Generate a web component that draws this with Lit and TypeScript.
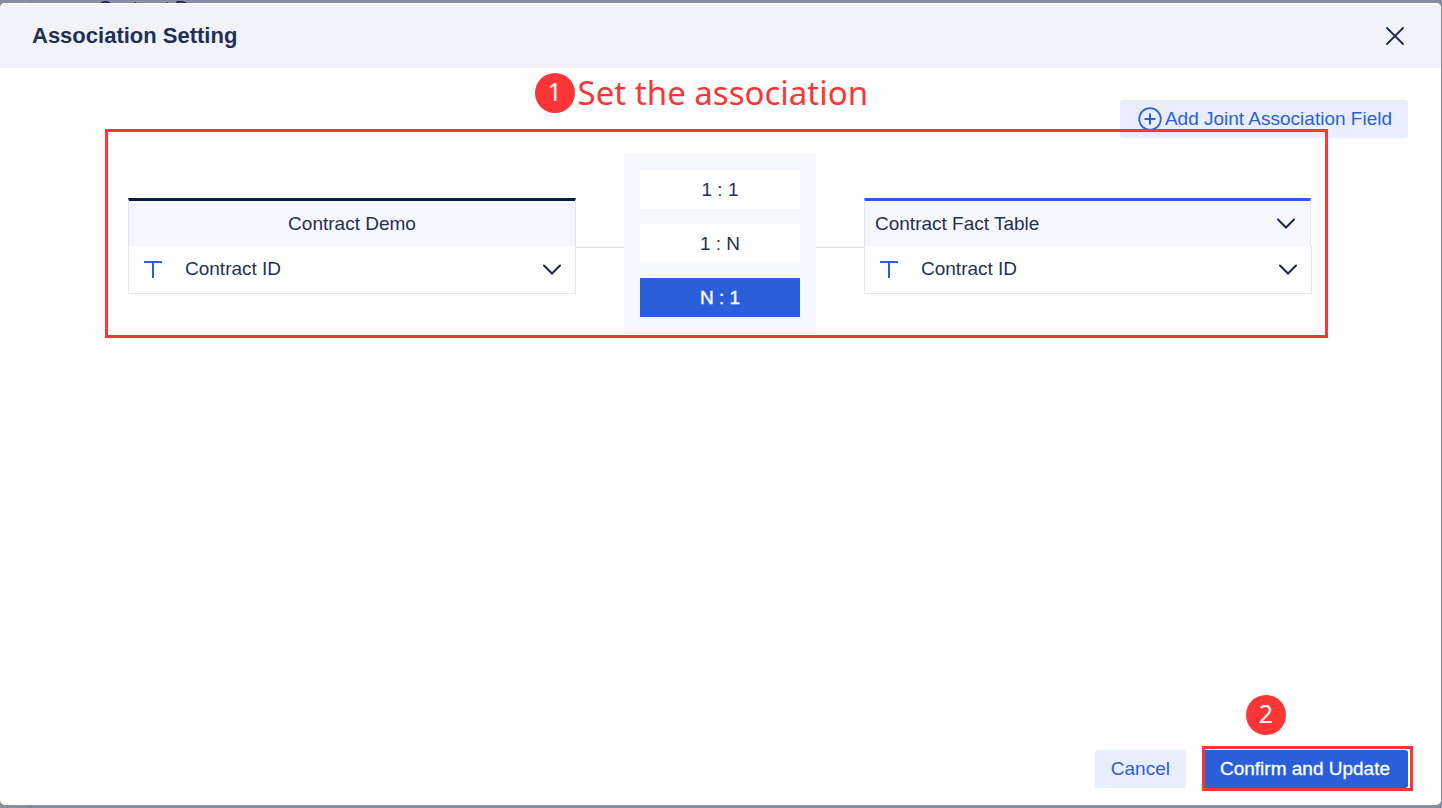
import { LitElement, html, css } from "lit";
import { customElement, property, state } from "lit/decorators.js";

const chevron = html`<svg class="chevron" width="20" height="12" viewBox="0 0 20 12" aria-hidden="true">
  <path d="M2 1.5 L10 9.5 L18 1.5" fill="none" stroke="#14264b" stroke-width="2" stroke-linecap="round" />
</svg>`;

const textType = html`<svg class="type" width="18" height="17" viewBox="0 0 18 17" aria-hidden="true">
  <path d="M0 1 H18 M9 1 V17" fill="none" stroke="#2b5fda" stroke-width="2" />
</svg>`;

@customElement("table-card")
export class TableCard extends LitElement {
  @property() name = "";
  @property() field = "";
  @property({ type: Boolean, reflect: true }) selectable = false;

  static styles = css`
    :host {
      display: block;
      --accent: #081d45;
    }
    :host([selectable]) {
      --accent: #2b5fda;
    }
    * {
      box-sizing: border-box;
    }
    .head,
    .row {
      display: grid;
      align-items: center;
      border: 1px solid #e4e5ee;
      border-width: 0 1px;
    }
    .head {
      height: 48px;
      border-top: 3px solid var(--accent);
      background: #f7f8fd;
      grid-template-columns: 1fr 34px;
    }
    :host([selectable]) .head {
      margin-right: 1px;
    }
    .title {
      grid-area: 1 / 1 / 2 / 3;
      margin: 0;
      font: inherit;
      text-align: center;
    }
    .row {
      height: 48px;
      border-bottom-width: 1px;
      background: #fff;
      grid-template-columns: 56px 1fr 33px;
    }
    select {
      appearance: none;
      border: 0;
      margin: 0;
      width: 100%;
      height: 100%;
      background: transparent;
      color: inherit;
      font: inherit;
      border-radius: 0;
      padding: 0 34px 0 10px;
      grid-area: 1 / 1 / 2 / 3;
    }
    .row select {
      grid-area: 1 / 1 / 2 / 4;
      padding-left: 56px;
      padding-bottom: 2px;
    }
    svg {
      pointer-events: none;
      display: block;
    }
    .type {
      grid-area: 1 / 1;
      margin-left: 15px;
    }
    .chevron {
      grid-area: 1 / 2;
    }
    .row .chevron {
      grid-area: 1 / 3;
    }
  `;

  render() {
    return html`
      <div class="head">
        ${this.selectable
          ? html`<select aria-label="Table"><option>${this.name}</option></select>${chevron}`
          : html`<h2 class="title">${this.name}</h2>`}
      </div>
      <div class="row">
        <select aria-label="Field of ${this.name}"><option>${this.field}</option></select>
        ${textType}${chevron}
      </div>
    `;
  }
}

@customElement("app-root")
export class AppRoot extends LitElement {
  @state() private relation = "N : 1";

  static styles = css`
    :host {
      display: block;
      font: 19px/24px "Liberation Sans", Arial, sans-serif;
      color: #1f3153;
    }
    * {
      box-sizing: border-box;
    }
    .page {
      position: relative;
      min-height: 100vh;
      padding: 3px 1px 3px 0;
      display: flex;
      background: #868d9e;
    }
    .behind {
      position: absolute;
      inset: 0 0 0 30px;
      border-left: 1px solid #777f92;
      padding-left: 67px;
      overflow: hidden;
      line-height: 16px;
      color: #10224c;
    }
    .dialog {
      position: relative;
      flex: 1;
      display: flex;
      flex-direction: column;
      background: #fff;
      border-radius: 5px;
      overflow: hidden;
    }
    .top {
      display: flex;
      align-items: center;
      justify-content: space-between;
      height: 65px;
      padding: 0 37px 0 32px;
      background: #f2f3f8;
      border-top: 1px solid #fff;
    }
    .top h1 {
      margin: 0;
      font-size: 22px;
      line-height: 28px;
    }
    button {
      font: inherit;
      border: 0;
      margin: 0;
      padding: 0 16px;
      height: 38px;
      border-radius: 3px;
      background: #e8eefb;
      color: #2b5fda;
      display: flex;
      align-items: center;
      white-space: nowrap;
    }
    .close {
      padding: 0;
      height: 20px;
      background: none;
    }
    .body {
      position: relative;
      flex: 1;
      padding: 32px 33px 0;
      display: flex;
      flex-direction: column;
    }
    .add {
      align-self: flex-end;
      gap: 3px;
      padding-left: 18px;
    }
    .assoc {
      position: relative;
      display: flex;
      align-items: flex-start;
      margin: 16px 96px 0 95px;
    }
    table-card {
      flex: 1;
      margin-top: 44px;
    }
    .line {
      width: 48px;
      height: 1px;
      margin-top: 93px;
      background: #dcdee6;
    }
    .kinds {
      border: 0;
      margin: 0;
      min-width: 0;
      width: 192px;
      padding: 16px 16px 18px;
      display: grid;
      gap: 15px;
      background: #f7f8fd;
    }
    .kind {
      position: relative;
      height: 39px;
      display: grid;
      place-items: center;
      background: #fff;
    }
    .kind input {
      appearance: none;
      position: absolute;
      inset: 0;
      margin: 0;
    }
    .kind.on {
      background: #2b5fda;
      color: #fff;
      -webkit-text-stroke: 0.4px #fff;
    }
    .mark {
      position: absolute;
      border: 3px solid #fc3636;
      pointer-events: none;
    }
    .assoc .mark {
      inset: -25px -16px -3px -23px;
    }
    .confirm .mark {
      inset: -4px -5px -3px 0;
    }
    .badge {
      width: 40px;
      height: 40px;
      border-radius: 50%;
      background: #fc3636;
      color: #fff;
      text-align: center;
      font: 25px/36px "Noto Sans", "Open Sans", sans-serif;
    }
    .note {
      position: absolute;
      top: 5px;
      left: 37.1%;
      display: flex;
      gap: 3px;
      color: #fc3636;
      font: 33px/40px "Noto Sans", "Open Sans", sans-serif;
      white-space: nowrap;
    }
    .foot {
      display: flex;
      justify-content: flex-end;
      gap: 16px;
      padding: 0 33px 17px;
    }
    .confirm {
      position: relative;
    }
    .confirm button {
      background: #2b5fda;
      color: #fff;
      padding: 0 18px;
      -webkit-text-stroke: 0.3px #fff;
    }
    .confirm .badge {
      position: absolute;
      left: 44px;
      top: -55px;
    }
  `;

  render() {
    return html`
      <div class="page">
        <div class="behind" aria-hidden="true">Contract D</div>
        <section class="dialog" role="dialog" aria-labelledby="title">
          <header class="top">
            <h1 id="title">Association Setting</h1>
            <button class="close" aria-label="Close">
              <svg width="18" height="18" viewBox="0 0 18 18" aria-hidden="true">
                <path d="M1 1 L17 17 M17 1 L1 17" stroke="#1b2d50" stroke-width="1.8" stroke-linecap="round" />
              </svg>
            </button>
          </header>
          <main class="body">
            <button class="add">
              <svg width="24" height="24" viewBox="0 0 24 24" fill="none" stroke="#2b5fda" aria-hidden="true">
                <circle cx="12" cy="12" r="10.8" stroke-width="1.7" />
                <path d="M12 6.5 V17.5 M6.5 12 H17.5" stroke-width="2" />
              </svg>
              <span>Add Joint Association Field</span>
            </button>
            <div class="assoc">
              <table-card name="Contract Demo" field="Contract ID"></table-card>
              <div class="line"></div>
              <fieldset class="kinds" aria-label="Relation">
                ${["1 : 1", "1 : N", "N : 1"].map(
                  (k) => html`<label class="kind ${k === this.relation ? "on" : ""}">
                    <input
                      type="radio"
                      name="relation"
                      .checked=${k === this.relation}
                      @change=${() => (this.relation = k)}
                    />
                    <span>${k}</span>
                  </label>`
                )}
              </fieldset>
              <div class="line"></div>
              <table-card selectable name="Contract Fact Table" field="Contract ID"></table-card>
              <div class="mark"></div>
            </div>
            <div class="note"><span class="badge">1</span><span>Set the association</span></div>
          </main>
          <footer class="foot">
            <button>Cancel</button>
            <div class="confirm">
              <button>Confirm and Update</button>
              <div class="mark"></div>
              <span class="badge">2</span>
            </div>
          </footer>
        </section>
      </div>
    `;
  }
}
